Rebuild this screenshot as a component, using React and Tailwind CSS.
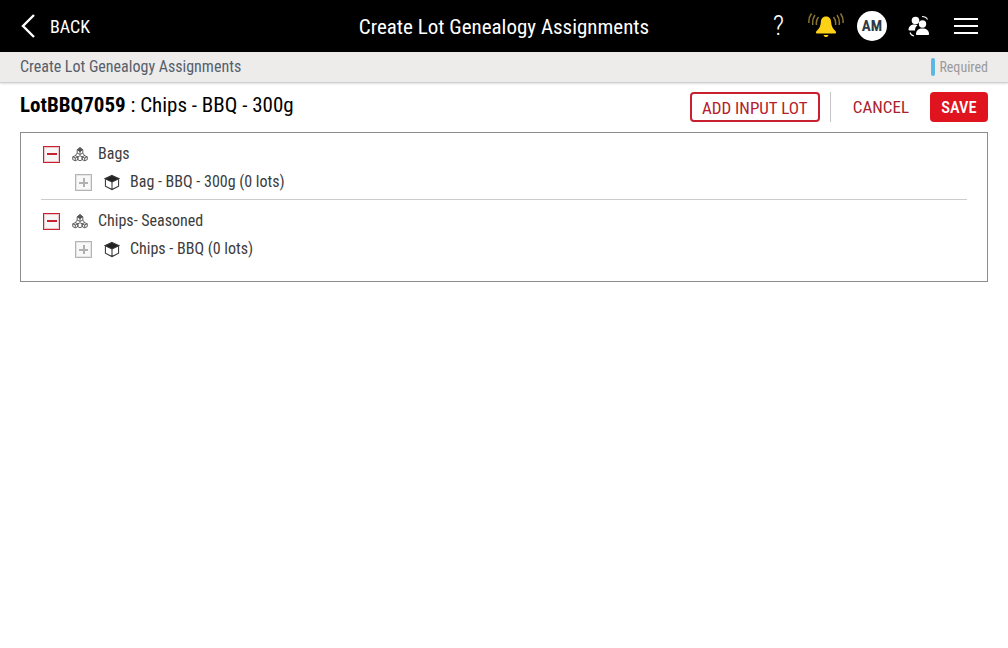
const font = { fontFamily: "Roboto, sans-serif" };

function BackIcon() {
  return (
    <svg width="16" height="26" viewBox="0 0 16 26" fill="none" stroke="white" strokeWidth="2.4">
      <path d="M14 2 L3 13 L14 24" />
    </svg>
  );
}

function BellIcon() {
  return (
    <svg width="36" height="28" viewBox="0 0 36 28" fill="none">
      <path d="M18 4.500c-3.500 0-5 2.500-5.200 6-.2 3.500-1.300 5.500-3.300 7.500-1 1-1.500 1.500-1.500 2.500 0 .6.400 1 1 1h18c.6 0 1-.4 1-1 0-1-.5-1.500-1.500-2.500-2-2-3.100-4-3.300-7.500-.2-3.500-1.700-6-5.200-6z" fill="#fdd116" />
      <path d="M15.500 23h5c-.5 1.400-1.300 2-2.500 2s-2-.6-2.500-2z" fill="#fdd116" />
      <path d="M10.500 5C8.500 7.500 8 10 8.500 13M7 3C4.800 6 4.200 9 4.800 13M3.500 1.500C1.300 4.500.5 7.500 1 11" stroke="#8a7433" strokeWidth="1.500" />
      <path d="M25.500 5c2 2.500 2.500 5 2 8M29 3c2.200 3 2.800 6 2.200 10M32.500 1.500c2.200 3 3 6 2.500 9.500" stroke="#8a7433" strokeWidth="1.500" />
    </svg>
  );
}

function UsersIcon() {
  return (
    <svg width="24" height="24" viewBox="0 0 24 24" fill="white">
      <circle cx="8.500" cy="6.500" r="3.800" />
      <path d="M1.500 16c0-3.500 2.500-5.500 6-5.500 1.200 0 2.200.2 3 .7-1.500 1-2.500 2.700-2.500 5.300H2.500c-.6 0-1-.2-1-.5z" />
      <circle cx="15.500" cy="10" r="3.700" />
      <path d="M9 20c0-3.500 2.500-5.500 6.500-5.500s6.500 2 6.500 5.500c0 .6-.4 1-1 1H10c-.6 0-1-.4-1-1z" />
      <path d="M15 2.500c2.500 0 4.500 1 5.500 3M3 18.500c.5 1.800 2 3 4 3.500" fill="none" stroke="white" strokeWidth="1.100" />
    </svg>
  );
}

function GroupIcon() {
  return (
    <svg width="17" height="16" viewBox="0 0 17 16" fill="none" stroke="#555" strokeWidth="1">
      <path d="M5.500 3.500 8.500 1l3 2.500-3 2z" fill="#555" />
      <path d="M5.500 3.500v3.500l3 1.500 3-1.500V3.500M8.500 5.500v3M3.500 10 5.500 7M13.500 10 11.500 7" />
      <path d="M.8 11l2.700-1.200L6.200 11v3l-2.700 1.200L.8 14zM.8 11l2.700 1.200L6.200 11M3.500 12.200v3" />
      <path d="M10.800 11l2.700-1.200 2.700 1.200v3l-2.700 1.200-2.700-1.200zM10.800 11l2.700 1.200 2.700-1.200M13.500 12.200v3" />
      <path d="M6.200 11l2.300-1.200L10.800 11v3l-2.300 1.200L6.200 14z" />
    </svg>
  );
}

function BoxIcon() {
  return (
    <svg width="17" height="17" viewBox="0 0 17 17" fill="none" stroke="#333" strokeWidth="1.100">
      <path d="M8.500 1 16 4.500 8.500 8 1 4.500z" fill="#222" />
      <path d="M1.500 5v7.500L8.500 16l7-3.500V5M8.500 8v8" />
    </svg>
  );
}

function MinusBox() {
  return (
    <div className="flex h-[17px] w-[17px] items-center justify-center border border-[#c8202f] bg-[#f6f6f6] shadow-[inset_0_0_0_1px_#eec4c8]">
      <div className="h-[2px] w-[10px] bg-[#c8202f]" />
    </div>
  );
}

function PlusBox() {
  return (
    <div className="relative h-[17px] w-[17px] border border-[#b4b4b4] bg-[#f8f8f8] shadow-[inset_0_0_0_1px_#e4e4e4]">
      <div className="absolute left-[3px] top-[7px] h-[2px] w-[9px] bg-[#b0b0b0]" />
      <div className="absolute left-[7px] top-[3px] h-[9px] w-[2px] bg-[#b0b0b0]" />
    </div>
  );
}

function TreeGroup({ name, child }) {
  return (
    <div>
      <div className="flex h-[28px] items-center pl-[22px]">
        <MinusBox />
        <div className="ml-[12px] flex w-[16px] justify-center"><GroupIcon /></div>
        <span className="ml-[10px] text-[16px] text-[#3c3c3c]">{name}</span>
      </div>
      <div className="flex h-[28px] items-center pl-[54px]">
        <PlusBox />
        <div className="ml-[12px] flex w-[16px] justify-center"><BoxIcon /></div>
        <span className="ml-[10px] text-[16px] text-[#3c3c3c]">{child}</span>
      </div>
    </div>
  );
}

export default function App() {
  return (
    <div style={font} className="h-[648px] w-[1008px] overflow-hidden bg-white [font-stretch:85%]">
      <header className="relative flex h-[52px] items-center justify-between bg-black pl-[20px] pr-[30px] text-white">
        <div className="flex items-center gap-[14px]">
          <BackIcon />
          <span className="text-[18px] font-normal">BACK</span>
        </div>
        <div className="absolute inset-x-0 top-[12px] text-center text-[21px]">Create Lot Genealogy Assignments</div>
        <div className="relative flex items-center">
          <span className="mr-[24px] text-[28px] font-light leading-none">?</span>
          <BellIcon />
          <div className="ml-[13px] flex h-[30px] w-[30px] items-center justify-center rounded-full bg-white text-[15px] font-bold text-[#2b3a46]">AM</div>
          <div className="ml-[20px]"><UsersIcon /></div>
          <div className="ml-[23px] flex w-[24px] flex-col gap-[5px]">
            <div className="h-[2px] bg-white" />
            <div className="h-[2px] bg-white" />
            <div className="h-[2px] bg-white" />
          </div>
        </div>
      </header>
      <div className="flex h-[31px] items-center justify-between border-b border-[#cfcfcf] bg-[#eeebeb] px-[20px] shadow-[0_1px_2px_rgba(0,0,0,0.12)]">
        <span className="text-[16px] text-[#55606a]">Create Lot Genealogy Assignments</span>
        <div className="flex items-center gap-[4px]">
          <div className="h-[18px] w-[4px] rounded-sm bg-[#5cb8e0]" />
          <span className="text-[14px] text-[#9a9a9a]">Required</span>
        </div>
      </div>
      <div className="flex items-start justify-between px-[20px] pt-[9px]">
        <div className="text-[21px] leading-[26px] text-black"><span className="font-bold">LotBBQ7059</span> : Chips - BBQ - 300g</div>
        <div className="flex h-[30px] items-center">
          <button type="button" className="flex h-[30px] w-[130px] items-center justify-center rounded-[4px] border-2 border-[#c8202f] pt-[3px] text-[17px] text-[#b5202c]">ADD INPUT LOT</button>
          <div className="ml-[10px] h-[30px] w-px bg-[#c4c4c4]" />
          <button type="button" className="ml-[22px] pt-[2px] text-[17px] text-[#a8232c]">CANCEL</button>
          <button type="button" className="ml-[21px] flex h-[30px] w-[58px] items-center justify-center rounded-[4px] bg-[#e0141e] pt-[2px] text-[16.500px] font-medium text-white">SAVE</button>
        </div>
      </div>
      <div className="mx-[20px] mt-[10px] h-[150px] border border-[#8c8c8c] pt-[7px]">
        <TreeGroup name="Bags" child="Bag - BBQ - 300g (0 lots)" />
        <div className="mx-[20px] mb-[7px] mt-[3px] h-px bg-[#cccccc]" />
        <TreeGroup name="Chips- Seasoned" child="Chips - BBQ (0 lots)" />
      </div>
    </div>
  );
}
